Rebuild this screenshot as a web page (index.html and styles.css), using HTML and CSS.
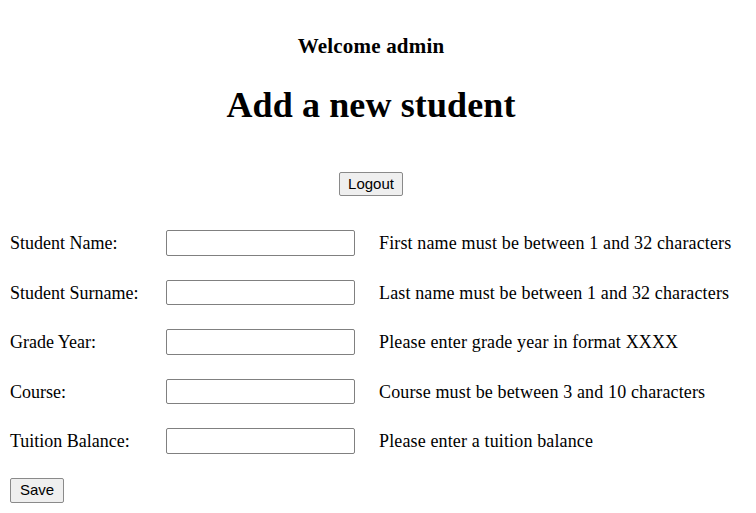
FILE: index.html
```html
<!DOCTYPE html>
<html lang="en">
<head>
<meta charset="utf-8">
<title>Add a new student</title>
<link rel="stylesheet" href="styles.css">
</head>
<body>
<div class="page">
  <header class="top">
    <h3 class="welcome">Welcome admin</h3>
    <h1 class="title">Add a new student</h1>
    <button class="btn logout" type="button">Logout</button>
  </header>
  <form class="form">
    <label class="label" for="fname">Student Name:</label>
    <input class="field" id="fname" type="text">
    <span class="hint">First name must be between 1 and 32 characters</span>

    <label class="label" for="lname">Student Surname:</label>
    <input class="field" id="lname" type="text">
    <span class="hint">Last name must be between 1 and 32 characters</span>

    <label class="label" for="grade">Grade Year:</label>
    <input class="field" id="grade" type="text">
    <span class="hint">Please enter grade year in format XXXX</span>

    <label class="label" for="course">Course:</label>
    <input class="field" id="course" type="text">
    <span class="hint">Course must be between 3 and 10 characters</span>

    <label class="label" for="balance">Tuition Balance:</label>
    <input class="field" id="balance" type="text">
    <span class="hint">Please enter a tuition balance</span>

    <div class="actions">
      <button class="btn save" type="button">Save</button>
    </div>
  </form>
</div>
</body>
</html>
```

FILE: styles.css
```css
html, body {
  margin: 0;
  padding: 0;
  background: #ffffff;
}

body {
  font-family: "Liberation Serif", "Times New Roman", serif;
  font-size: 18px;
  color: #000000;
}

.page {
  padding: 34px 24px 0 10px;
}

.top {
  display: flex;
  flex-direction: column;
  align-items: center;
}

.welcome {
  margin: 0;
  font-size: 21px;
  line-height: 24px;
  font-weight: bold;
  letter-spacing: 0.2px;
}

.title {
  margin: 25.5px 0 0;
  font-size: 36px;
  line-height: 42px;
  font-weight: bold;
  letter-spacing: 0.12px;
}

.btn {
  font-family: "Liberation Sans", Arial, sans-serif;
  font-size: 15px;
  color: #000000;
  background: #efefef;
  border: 1px solid #8a8a8a;
  border-radius: 2px;
  height: 24.5px;
  padding: 0 9px;
  line-height: 20px;
}

.logout {
  margin-top: 46.2px;
  height: 24px;
  padding: 0 8.5px;
}

.form {
  margin-top: 34.8px;
  display: grid;
  grid-template-columns: 156px 213px auto;
  row-gap: 24.2px;
  align-items: start;
}

.label {
  padding-top: 1px;
  line-height: 24px;
  white-space: nowrap;
}

.field {
  box-sizing: border-box;
  width: 189px;
  height: 25.3px;
  margin: 0;
  border: 1px solid #808080;
  border-radius: 2px;
  background: #ffffff;
  font-family: "Liberation Sans", Arial, sans-serif;
  font-size: 15px;
}

.hint {
  padding-top: 1px;
  line-height: 24px;
  white-space: nowrap;
  letter-spacing: 0.14px;
}

.actions {
  grid-column: 1 / -1;
  padding-top: 0.3px;
}
```
